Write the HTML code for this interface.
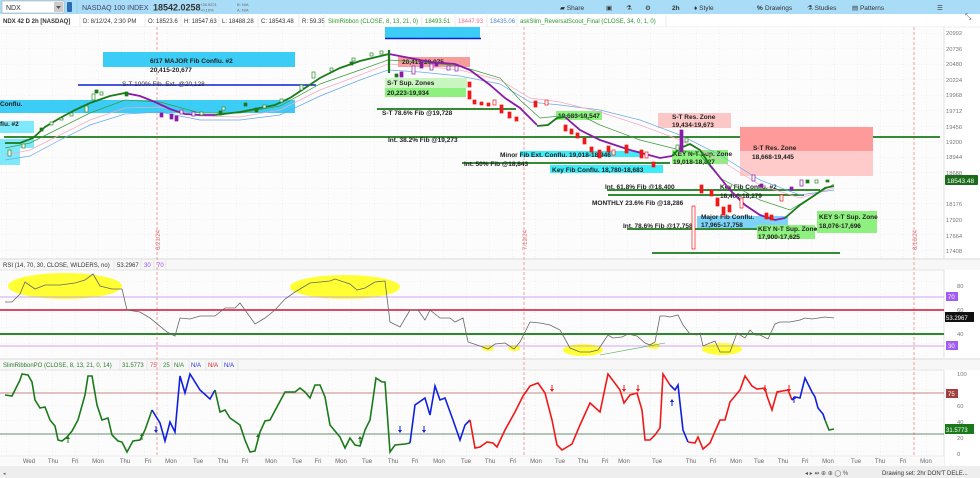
<!DOCTYPE html>
<html><head><meta charset="utf-8"><style>
html,body{margin:0;padding:0;width:980px;height:478px;overflow:hidden;background:#fff;font-family:"Liberation Sans",sans-serif;}
svg{display:block}
text{font-family:"Liberation Sans",sans-serif;}
.a{font-size:6.5px;fill:#222;font-weight:bold}
.ax{font-size:6.5px;fill:#777}
.tb{font-size:7px;fill:#333}
.ib{font-size:7px;fill:#333}
</style></head><body>
<svg width="980" height="478" viewBox="0 0 980 478" xmlns="http://www.w3.org/2000/svg">
<defs>
<pattern id="g" width="23" height="15.5" patternUnits="userSpaceOnUse" x="6" y="17.5">
<path d="M0 0V15.5M0 0H23" stroke="#dcdcdc" stroke-width="0.6" stroke-dasharray="1 2" fill="none"/>
</pattern>
</defs>
<!-- toolbar -->
<rect x="0" y="0" width="980" height="14" fill="#a9dcf6"/>
<rect x="2" y="1" width="62" height="12" fill="#fff" stroke="#999" stroke-width="0.5"/>
<text x="6" y="10" class="tb">NDX</text>
<rect x="54" y="2" width="9" height="10" fill="#ccc"/><path d="M56 6h5l-2.5 3z" fill="#555"/>
<rect x="67" y="2" width="5" height="10" fill="#2b6cb0" rx="1"/>
<line x1="77" y1="0" x2="77" y2="14" stroke="#8cc" stroke-width="0.5"/>
<text x="82" y="10" class="tb" style="fill:#446">NASDAQ 100 INDEX</text>
<text x="153" y="10.5" style="font-size:9px;font-weight:bold;fill:#333">18542.0258</text>
<text x="200" y="6" style="font-size:4px;fill:#666">+28.9221</text><text x="200" y="11.5" style="font-size:4px;fill:#666">+0.16%</text>
<text x="237" y="6" style="font-size:4px;fill:#666">B: N/A</text><text x="237" y="11.5" style="font-size:4px;fill:#666">A: N/A</text>
<g class="tb" style="font-size:6.5px">
<text x="560" y="10">▰ Share</text><text x="606" y="10">▣</text><text x="626" y="10">⚗</text><text x="645" y="10">⚙</text>
<text x="757" y="10" style="font-weight:bold">%</text>
<text x="672" y="10" style="font-weight:bold">2h</text><text x="694" y="10">♦ Style</text><text x="765" y="10">Drawings</text>
<text x="807" y="10">⚗ Studies</text><text x="852" y="10">▤ Patterns</text><text x="937" y="10">☰</text>
</g>
<!-- info bar -->
<rect x="0" y="14" width="980" height="13" fill="#fff"/>
<line x1="0" y1="27" x2="980" y2="27" stroke="#ddd" stroke-width="0.6"/>
<g class="ib" style="font-size:6px">
<text x="3" y="23" style="font-weight:bold">NDX 42 D 2h [NASDAQ]</text>
<text x="83" y="23">D: 8/12/24, 2:30 PM</text><text x="148" y="23">O: 18523.6</text><text x="184" y="23">H: 18547.63</text>
<text x="222" y="23">L: 18488.28</text><text x="261" y="23">C: 18543.48</text><text x="302" y="23">R: 59.35</text>
<text x="328" y="23" style="fill:#2a9a2a">SlimRibbon (CLOSE, 8, 13, 21, 0)</text>
<text x="425" y="23" style="fill:#2a9a2a">18493.51</text><text x="458" y="23" style="fill:#f07090">18447.93</text>
<text x="490" y="23" style="fill:#4a8ad0">18435.06</text>
<text x="520" y="23" style="fill:#2a9a2a">askSlim_ReversalScout_Final (CLOSE, 34, 0, 1, 0)</text>
</g>
<g stroke="#ddd" stroke-width="0.6"><line x1="80" y1="15" x2="80" y2="27"/><line x1="145" y1="15" x2="145" y2="27"/><line x1="181" y1="15" x2="181" y2="27"/><line x1="219" y1="15" x2="219" y2="27"/><line x1="258" y1="15" x2="258" y2="27"/><line x1="299" y1="15" x2="299" y2="27"/><line x1="324" y1="15" x2="324" y2="27"/><line x1="422" y1="15" x2="422" y2="27"/><line x1="455" y1="15" x2="455" y2="27"/><line x1="487" y1="15" x2="487" y2="27"/><line x1="517" y1="15" x2="517" y2="27"/><line x1="666" y1="15" x2="666" y2="27"/></g>
<!-- panel backgrounds -->
<rect x="0" y="27" width="944" height="232" fill="#fcfcfc"/>
<rect x="0" y="27" width="944" height="232" fill="url(#g)"/>
<rect x="0" y="270" width="944" height="88" fill="#fcfcfc"/>
<rect x="0" y="270" width="944" height="88" fill="url(#g)"/>
<rect x="0" y="370" width="944" height="86" fill="#fcfcfc"/>
<rect x="0" y="370" width="944" height="86" fill="url(#g)"/>
<line x1="944" y1="27" x2="944" y2="466" stroke="#ccc" stroke-width="0.6"/>
<rect x="0" y="258" width="980" height="12" fill="#f7f7f7"/>
<line x1="0" y1="259" x2="980" y2="259" stroke="#ddd"/><line x1="0" y1="270" x2="944" y2="270" stroke="#e4e4e4"/>
<rect x="0" y="358" width="980" height="12" fill="#f7f7f7"/>
<line x1="0" y1="359" x2="980" y2="359" stroke="#ddd"/><line x1="0" y1="370" x2="944" y2="370" stroke="#e4e4e4"/>
<rect x="0" y="456" width="944" height="10" fill="#fafafa"/>
<line x1="0" y1="456" x2="944" y2="456" stroke="#ddd" stroke-width="0.6"/>
<rect x="0" y="466" width="980" height="12" fill="#eeeeee"/>
<!-- vertical dashed date lines -->
<g stroke="#ef8a8a" stroke-width="0.8" stroke-dasharray="3 2"><line x1="157" y1="27" x2="157" y2="456"/><line x1="524" y1="27" x2="524" y2="456"/><line x1="914" y1="27" x2="914" y2="456"/></g>
<g style="font-size:6px;fill:#e07a7a"><text transform="translate(160,250) rotate(-90)">6/21/24</text><text transform="translate(527,250) rotate(-90)">7/19/24</text><text transform="translate(917,250) rotate(-90)">8/16/24</text></g>
<!-- price axis -->
<g class="ax" style="font-size:5.8px">
<text x="946" y="35">20992</text><text x="946" y="51">20736</text><text x="946" y="66">20480</text><text x="946" y="82">20224</text><text x="946" y="97">19968</text><text x="946" y="113">19712</text><text x="946" y="129">19456</text><text x="946" y="144">19200</text><text x="946" y="159">18944</text><text x="946" y="175">18688</text><text x="946" y="206">18176</text><text x="946" y="222">17920</text><text x="946" y="238">17664</text><text x="946" y="253">17408</text>
</g>
<rect x="945" y="175" width="33" height="10" fill="#1a6b1a" rx="1"/><text x="947" y="183" style="font-size:6.5px;fill:#fff">18543.48</text>
<text x="965" y="19" style="font-size:8px;fill:#555">⤡</text>
<!-- annotations main -->
<rect x="385" y="27" width="95" height="11" fill="#3ccdf7"/><line x1="385" y1="38.5" x2="481" y2="38.5" stroke="#1020d0" stroke-width="1.6"/>
<rect x="103" y="52" width="192" height="15" fill="#3ccdf7"/>
<text x="150" y="63" class="a">6/17 MAJOR Fib Conflu. #2</text><text x="150" y="72" class="a">20,415-20,677</text>
<rect x="0" y="100" width="295" height="13" fill="#3ccdf7"/><text x="0" y="106" class="a">Conflu.</text>
<line x1="78" y1="85" x2="316" y2="85" stroke="#1020d0" stroke-width="1.6"/><text x="122" y="86" class="a" style="font-weight:normal;fill:#333">S-T 100% Fib. Ext. @20,128</text>
<rect x="0" y="121" width="34" height="12" fill="#7ee9fb"/><text x="0" y="126" class="a">flu. #2</text>
<rect x="0" y="139" width="34" height="9" fill="#7ee9fb"/><rect x="0" y="148" width="20" height="17" fill="#7ee9fb"/>
<line x1="4" y1="137" x2="940" y2="137" stroke="#1a7a1a" stroke-width="1.8"/>
<text x="388" y="142" class="a">Int. 38.2% Fib @19,273</text>
<rect x="398" y="57" width="72" height="10" fill="#f79c9c"/><text x="402" y="64" class="a">20,415-20,975</text>
<rect x="385" y="78" width="82" height="10" fill="#c9f5c0"/><text x="387" y="85" class="a">S-T Sup. Zones</text>
<rect x="385" y="88" width="81" height="9" fill="#8ef07e"/><text x="387" y="95" class="a">20,223-19,934</text>
<line x1="377" y1="109" x2="516" y2="109" stroke="#1a7a1a" stroke-width="1.8"/><text x="382" y="115" class="a">S-T 78.6% Fib @19,728</text>
<rect x="556" y="111" width="46" height="9" fill="#8ef07e"/><text x="558" y="118" class="a">19,683-19,547</text>
<rect x="658" y="113" width="73" height="15" fill="#fcc7c7"/><text x="672" y="119" class="a">S-T Res. Zone</text><text x="672" y="127" class="a">19,434-19,673</text>
<rect x="740" y="127" width="133" height="24" fill="#ff9a9a"/><rect x="740" y="151" width="133" height="25" fill="#ffcaca"/>
<text x="753" y="150" class="a">S-T Res. Zone</text><text x="752" y="159" class="a">18,668-19,445</text>
<rect x="520" y="151" width="120" height="6" fill="#3cecf9"/><text x="500" y="157" class="a">Minor Fib Ext. Conflu. 19,018-18,946</text>
<line x1="462" y1="163" x2="670" y2="163" stroke="#1a7a1a" stroke-width="1.8"/><text x="464" y="166" class="a">Int. 50% Fib @18,843</text>
<rect x="550" y="165" width="113" height="8" fill="#3cecf9"/><text x="552" y="172" class="a">Key Fib Conflu. 18,780-18,683</text>
<rect x="672" y="150" width="56" height="14" fill="#8ef07e"/><text x="673" y="156" class="a">KEY N-T Sup. Zone</text><text x="673" y="164" class="a">19,018-18,827</text>
<line x1="607" y1="190" x2="820" y2="190" stroke="#1a7a1a" stroke-width="1.8"/><line x1="608" y1="195" x2="804" y2="195" stroke="#1a7a1a" stroke-width="1.8"/>
<text x="605" y="189" class="a">Int. 61.8% Fib @18,400</text><text x="592" y="205" class="a">MONTHLY 23.6% Fib @18,286</text>
<text x="720" y="189" class="a">Key Fib Conflu. #2</text><text x="720" y="198" class="a">18,400-18,279</text>
<rect x="697" y="216" width="91" height="12" fill="#7cd2f7"/><text x="701" y="219" class="a">Major Fib Conflu.</text><text x="701" y="227" class="a">17,965-17,758</text>
<line x1="627" y1="229" x2="822" y2="229" stroke="#1a7a1a" stroke-width="1.8"/><text x="623" y="228" class="a">Int. 78.6% Fib @17,758</text>
<rect x="757" y="225" width="58" height="14" fill="#8ef07e"/><text x="758" y="231" class="a">KEY N-T Sup. Zone</text><text x="758" y="239" class="a">17,900-17,625</text>
<rect x="817" y="211" width="60" height="22" fill="#8ef07e"/><text x="819" y="219" class="a">KEY S-T Sup. Zone</text><text x="819" y="228" class="a">18,076-17,696</text>
<line x1="652" y1="253" x2="840" y2="253" stroke="#1a7a1a" stroke-width="1.8"/>
<!-- ribbons -->
<polyline fill="none" stroke="#6aa8e8" stroke-width="0.7" points="5,160 30,156 60,140 90,125 125,114 160,112 200,120 240,120 280,115 320,96 360,80 388,70 420,72 460,76 500,84 530,102 560,105 600,110 640,120 680,135 720,155 760,180 800,195 834,190"/>
<polyline fill="none" stroke="#f5a9c4" stroke-width="0.7" points="5,155 30,150 60,135 90,120 125,108 160,107 200,116 240,117 280,110 320,90 360,75 388,64 420,66 460,70 500,80 530,98 560,102 600,112 640,125 680,140 720,160 760,185 800,198 834,188"/>
<polyline fill="none" stroke="#3a9a3a" stroke-width="0.7" points="5,148 30,143 60,128 90,113 125,100 160,102 200,113 240,113 280,106 320,84 360,70 388,60 420,62 460,66 500,78 520,100 540,118 560,116 580,115 600,125 640,140 680,150 700,155 720,178 760,200 790,210 810,198 834,184"/>
<polyline fill="none" stroke="#1a7a1a" stroke-width="1.8" points="5,143 20,143 33,138 45,127 60,118 75,110 90,103 110,96 125,93"/>
<polyline fill="none" stroke="#8a1aa8" stroke-width="1.8" points="125,93 140,96 155,102 170,109 185,114 200,115 215,115"/>
<polyline fill="none" stroke="#1a7a1a" stroke-width="1.8" points="215,115 240,112 260,108 275,105 290,98 305,88 320,78 340,68 360,61 389,54"/>
<polyline fill="none" stroke="#8a1aa8" stroke-width="1.8" points="389,54 410,58 430,62 455,64 470,70 490,85 505,98 520,108 537,125"/>
<polyline fill="none" stroke="#1a7a1a" stroke-width="1.8" points="537,126 548,125 557,118 565,117"/>
<polyline fill="none" stroke="#8a1aa8" stroke-width="1.8" points="565,117 580,130 600,140 630,150 660,158 672,156"/>
<polyline fill="none" stroke="#1a7a1a" stroke-width="1.8" points="672,156 680,148 690,144 700,150 710,165"/>
<polyline fill="none" stroke="#8a1aa8" stroke-width="1.8" points="710,165 730,190 745,205 760,215 775,220 785,218"/>
<polyline fill="none" stroke="#1a7a1a" stroke-width="1.8" points="785,218 800,205 815,195 825,188 834,186"/>
<line x1="389" y1="50" x2="389" y2="73" stroke="#1a7a1a" stroke-width="2.2"/>
<!-- candles -->
<g stroke-width="0.7">
<g fill="#fff" stroke="#2a8a2a"><rect x="8" y="150" width="3" height="6"/><rect x="22" y="144" width="3" height="4"/><rect x="50" y="122" width="3" height="3"/><rect x="60" y="118" width="3" height="2"/><rect x="70" y="113" width="3" height="3"/><rect x="85" y="106" width="3" height="6"/><rect x="92" y="94" width="3" height="6"/><rect x="100" y="92" width="3" height="3"/><rect x="200" y="112" width="3" height="3"/><rect x="222" y="107" width="3" height="3"/><rect x="263" y="105" width="3" height="3"/><rect x="280" y="99" width="3" height="3"/><rect x="300" y="85" width="3" height="5"/><rect x="312" y="72" width="3" height="6"/><rect x="330" y="68" width="3" height="3"/><rect x="352" y="58" width="3" height="3"/><rect x="370" y="53" width="3" height="3"/><rect x="380" y="51" width="3" height="3"/><rect x="676" y="145" width="3" height="5"/><rect x="685" y="138" width="3" height="4"/><rect x="815" y="180" width="3" height="3"/></g>
<g fill="#1a7a1a" stroke="#1a7a1a"><rect x="40" y="128" width="3" height="3"/><rect x="95" y="90" width="3" height="3"/><rect x="125" y="92" width="3" height="4"/><rect x="219" y="111" width="3" height="4"/><rect x="244" y="103" width="3" height="3"/><rect x="255" y="108" width="3" height="4"/><rect x="350" y="62" width="3" height="3"/><rect x="395" y="74" width="3" height="3"/><rect x="806" y="180" width="3" height="3"/><rect x="826" y="180" width="3" height="2"/></g>
<g fill="#fff" stroke="#8a1aa8"><rect x="180" y="110" width="3" height="4"/><rect x="192" y="112" width="3" height="4"/><rect x="412" y="66" width="3" height="8"/><rect x="430" y="64" width="3" height="6"/><rect x="447" y="66" width="3" height="4"/><rect x="455" y="66" width="3" height="5"/><rect x="752" y="175" width="3" height="6"/><rect x="800" y="180" width="3" height="6"/></g>
<g fill="#8a1aa8" stroke="#8a1aa8"><rect x="160" y="113" width="3" height="4"/><rect x="170" y="114" width="3" height="5"/><rect x="175" y="116" width="3" height="5"/><rect x="400" y="72" width="3" height="5"/><rect x="420" y="62" width="3" height="6"/><rect x="435" y="63" width="3" height="3"/><rect x="680" y="130" width="3" height="22"/><rect x="760" y="184" width="3" height="3"/><rect x="790" y="187" width="3" height="3"/></g>
<g fill="#f01818" stroke="#f01818"><rect x="468" y="82" width="3" height="5"/><rect x="468" y="91" width="3" height="8"/><rect x="473" y="100" width="3" height="4"/><rect x="480" y="102" width="3" height="3"/><rect x="487" y="103" width="3" height="3"/><rect x="500" y="105" width="3" height="8"/><rect x="508" y="112" width="3" height="6"/><rect x="515" y="117" width="3" height="4"/><rect x="534" y="101" width="3" height="6"/><rect x="564" y="125" width="3" height="6"/><rect x="570" y="129" width="3" height="5"/><rect x="576" y="133" width="3" height="5"/><rect x="583" y="138" width="3" height="6"/><rect x="590" y="147" width="3" height="5"/><rect x="598" y="150" width="3" height="8"/><rect x="607" y="146" width="3" height="6"/><rect x="625" y="145" width="3" height="8"/><rect x="640" y="150" width="3" height="8"/><rect x="652" y="162" width="3" height="5"/><rect x="700" y="185" width="3" height="8"/><rect x="710" y="190" width="3" height="6"/><rect x="716" y="198" width="3" height="8"/><rect x="722" y="207" width="3" height="8"/><rect x="728" y="205" width="3" height="7"/><rect x="765" y="213" width="3" height="6"/><rect x="770" y="215" width="3" height="5"/></g>
<g fill="#fff" stroke="#f01818"><rect x="493" y="100" width="3" height="5"/><rect x="545" y="100" width="3" height="5"/><rect x="612" y="150" width="3" height="5"/><rect x="645" y="152" width="3" height="6"/><rect x="692" y="206" width="3" height="43"/><rect x="740" y="198" width="3" height="10"/><rect x="780" y="195" width="3" height="6"/></g>
</g>
<!-- RSI panel -->
<text x="3" y="267" style="font-size:6px;fill:#333">RSI (14, 70, 30, CLOSE, WILDERS, no)</text>
<text x="117" y="267" style="font-size:6px;fill:#333">53.2967</text><text x="144" y="267" style="font-size:6px;fill:#9a4aff">30</text><text x="157" y="267" style="font-size:6px;fill:#9a4aff">70</text>
<g stroke="#ddd" stroke-width="0.6"><line x1="114" y1="260" x2="114" y2="270"/><line x1="141" y1="260" x2="141" y2="270"/><line x1="154" y1="260" x2="154" y2="270"/><line x1="166" y1="260" x2="166" y2="270"/></g>
<ellipse cx="65" cy="286" rx="57" ry="13" fill="#ffff33"/>
<ellipse cx="345" cy="287" rx="55" ry="12" fill="#ffff33"/>
<ellipse cx="488" cy="348" rx="6" ry="3" fill="#ffff33"/><ellipse cx="514" cy="348" rx="6" ry="3" fill="#ffff33"/>
<ellipse cx="583" cy="350" rx="20" ry="6" fill="#ffff33"/><ellipse cx="654" cy="346" rx="6" ry="3" fill="#ffff33"/>
<ellipse cx="722" cy="349" rx="20" ry="6" fill="#ffff33"/>
<line x1="0" y1="297" x2="944" y2="297" stroke="#c58af5" stroke-width="0.8"/>
<line x1="0" y1="346" x2="944" y2="346" stroke="#c58af5" stroke-width="0.8"/>
<line x1="0" y1="310" x2="944" y2="310" stroke="#d0103a" stroke-width="1.5"/>
<line x1="0" y1="334" x2="944" y2="334" stroke="#2a8a2a" stroke-width="2"/>
<polyline fill="none" stroke="#666" stroke-width="0.8" points="5,302 12,302 20,294 25,282 35,289 45,285 60,285 75,283 85,280 93,274 100,286 112,289 122,289 127,310 140,312 150,318 167,332 175,336 180,318 190,319 200,316 215,316 225,308 235,308 240,303 255,324 265,318 275,310 285,299 295,292 310,283 330,281 335,279 350,284 357,290 365,288 375,282 385,281 390,322 400,327 410,310 418,310 425,320 430,310 440,318 450,318 455,322 463,318 468,342 480,346 488,349 495,344 505,343 514,349 520,342 530,322 540,323 550,325 560,330 570,348 580,352 590,352 598,350 608,335 613,338 622,337 628,334 637,336 645,343 650,345 655,342 660,316 665,316 670,317 678,315 683,325 690,334 697,335 700,333 703,346 710,343 715,341 720,352 730,352 737,333 745,338 750,330 755,335 760,335 768,339 775,324 780,322 790,322 800,320 805,318 812,319 825,317 834,318"/>
<line x1="600" y1="355" x2="665" y2="343" stroke="#4aa84a" stroke-width="0.6"/>
<g class="ax" style="font-size:5.8px"><text x="957" y="288">80</text><text x="957" y="312">60</text><text x="957" y="336">40</text></g>
<rect x="946" y="292" width="12" height="9" fill="#a15cf5"/><text x="948" y="299" style="font-size:6px;fill:#fff">70</text>
<rect x="946" y="341" width="12" height="9" fill="#a15cf5"/><text x="948" y="348" style="font-size:6px;fill:#fff">30</text>
<rect x="945" y="312" width="29" height="10" fill="#111"/><text x="946" y="320" style="font-size:6px;fill:#fff">53.2967</text>
<!-- PO panel -->
<text x="3" y="367" style="font-size:6px;fill:#2a7a2a">SlimRibbonPO (CLOSE, 8, 13, 21, 0, 14)</text>
<text x="122" y="367" style="font-size:6px;fill:#2a7a2a">31.5773</text><text x="150" y="367" style="font-size:6px;fill:#e05050">75</text><text x="163" y="367" style="font-size:6px;fill:#2a7a2a">25</text>
<text x="174" y="367" style="font-size:6px;fill:#2a7a2a">N/A</text><text x="191" y="367" style="font-size:6px;fill:#2030e0">N/A</text><text x="208" y="367" style="font-size:6px;fill:#e02020">N/A</text><text x="224" y="367" style="font-size:6px;fill:#2030e0">N/A</text>
<g stroke="#ddd" stroke-width="0.6"><line x1="120" y1="360" x2="120" y2="370"/><line x1="147" y1="360" x2="147" y2="370"/><line x1="160" y1="360" x2="160" y2="370"/><line x1="172" y1="360" x2="172" y2="370"/><line x1="189" y1="360" x2="189" y2="370"/><line x1="206" y1="360" x2="206" y2="370"/><line x1="222" y1="360" x2="222" y2="370"/><line x1="238" y1="360" x2="238" y2="370"/></g>
<line x1="0" y1="393" x2="944" y2="393" stroke="#b06060" stroke-width="0.7"/>
<line x1="0" y1="434" x2="944" y2="434" stroke="#3a6a4a" stroke-width="0.7"/>
<polyline fill="none" stroke="#1a7a1a" stroke-width="1.6" points="5,395 12,396 20,380 22,374 28,375 32,382 35,400 40,408 45,407 50,420 55,426 58,440 62,441 67,437 72,431 78,420 85,395 88,376 92,376 97,405 102,420 108,418 112,435 118,441 122,442 127,452 133,441 140,440 145,430 152,410"/>
<polyline fill="none" stroke="#1020e0" stroke-width="1.6" points="152,410 160,423 165,441 170,422 175,432 180,376 185,393 190,374 200,390 210,399 215,390"/>
<polyline fill="none" stroke="#1a7a1a" stroke-width="1.6" points="215,390 220,412 225,410 230,418 240,425 245,440 250,452 255,451 260,432 265,421 270,420 278,405 285,392 295,392 300,388 305,392 310,398 315,385 320,385 325,397 330,425 340,437 345,448 350,438 355,445 360,446 365,430 370,420 376,378 382,382 385,382 390,452 395,445 405,444 410,443"/>
<polyline fill="none" stroke="#1020e0" stroke-width="1.6" points="410,443 415,405 425,398 430,415 435,386 440,400 445,398 453,420 460,440 465,425 470,420"/>
<polyline fill="none" stroke="#f01818" stroke-width="1.6" points="470,420 475,448 480,447 487,442 493,443 497,447 505,430 515,412 523,396 530,386 538,383 545,393 552,420 557,445 562,450 572,444 580,425 590,403 600,412 608,374 620,390 624,403 630,395 637,393 642,410 645,440 650,440 655,435 660,428 663,374 670,385"/>
<polyline fill="none" stroke="#1020e0" stroke-width="1.6" points="670,385 675,390 678,385 683,430 688,442"/>
<polyline fill="none" stroke="#f01818" stroke-width="1.6" points="688,442 695,443 698,437 703,449 710,443 720,420 725,420 730,402 740,390 745,376 752,386 757,389 765,388 767,396 772,410 777,392 788,390 792,400"/>
<polyline fill="none" stroke="#1020e0" stroke-width="1.6" points="792,400 795,397 800,398 805,378 812,392 815,397 818,408 823,414 825,420"/>
<polyline fill="none" stroke="#1a7a1a" stroke-width="1.6" points="825,420 829,430 834,429"/>
<g fill="#1a7a1a"><path d="M68 436l-2 3h1.5v4h1v-4h1.5z"/><path d="M142 433l-2 3h1.5v4h1v-4h1.5z"/><path d="M258 434l-2 3h1.5v4h1v-4h1.5z"/><path d="M360 436l-2 3h1.5v4h1v-4h1.5z"/></g>
<g fill="#1020e0"><path d="M156 433l-2-3h1.5v-4h1v4h1.5z"/><path d="M400 433l-2-3h1.5v-4h1v4h1.5z"/><path d="M424 433l-2-3h1.5v-4h1v4h1.5z"/><path d="M672 399l-2 3h1.5v4h1v-4h1.5z"/><path d="M794 396l-2 3h1.5v4h1v-4h1.5z"/></g>
<g fill="#f01818"><path d="M624 392l-2-3h1.5v-4h1v4h1.5z"/><path d="M638 392l-2-3h1.5v-4h1v4h1.5z"/><path d="M765 392l-2-3h1.5v-4h1v4h1.5z"/><path d="M789 392l-2-3h1.5v-4h1v4h1.5z"/><path d="M552 392l-2-3h1.5v-4h1v4h1.5z"/></g>
<g class="ax" style="font-size:5.8px"><text x="957" y="376">100</text><text x="957" y="408">60</text><text x="957" y="424">40</text><text x="957" y="440">20</text><text x="957" y="456">0</text></g>
<rect x="946" y="389" width="12" height="9" fill="#a04040"/><text x="948" y="396" style="font-size:6px;fill:#fff">75</text>
<rect x="945" y="424" width="29" height="10" fill="#1a7a1a"/><text x="946" y="432" style="font-size:6px;fill:#fff">31.5773</text>
<!-- x axis -->
<g class="ax" style="font-size:6px;fill:#666" text-anchor="middle">
<text x="29" y="463">Wed</text><text x="53" y="463">Thu</text><text x="75" y="463">Fri</text><text x="98" y="463">Mon</text><text x="125" y="463">Thu</text><text x="148" y="463">Fri</text><text x="171" y="463">Mon</text><text x="198" y="463">Tue</text><text x="223" y="463">Thu</text><text x="245" y="463">Fri</text><text x="271" y="463">Mon</text><text x="297" y="463">Tue</text><text x="318" y="463">Fri</text><text x="341" y="463">Mon</text><text x="367" y="463">Tue</text><text x="393" y="463">Thu</text><text x="415" y="463">Fri</text><text x="439" y="463">Mon</text><text x="466" y="463">Tue</text><text x="490" y="463">Thu</text><text x="513" y="463">Fri</text><text x="536" y="463">Mon</text><text x="560" y="463">Tue</text><text x="583" y="463">Thu</text><text x="605" y="463">Fri</text><text x="624" y="463">Mon</text><text x="657" y="463">Tue</text><text x="691" y="463">Thu</text><text x="713" y="463">Fri</text><text x="736" y="463">Mon</text><text x="759" y="463">Tue</text><text x="783" y="463">Thu</text><text x="805" y="463">Fri</text><text x="828" y="463">Mon</text><text x="856" y="463">Tue</text><text x="880" y="463">Thu</text><text x="903" y="463">Fri</text><text x="926" y="463">Mon</text>
</g>
<!-- status bar -->
<text x="3" y="475" style="font-size:5px;fill:#666">◂</text>
<text x="805" y="475" style="font-size:6px;fill:#555">◂ ▸ ⇹ ⊕ ⊕ ◯ %</text>
<text x="882" y="475" style="font-size:6px;fill:#333">Drawing set: 2hr DON'T DELE...</text>
</svg>
</body></html>
